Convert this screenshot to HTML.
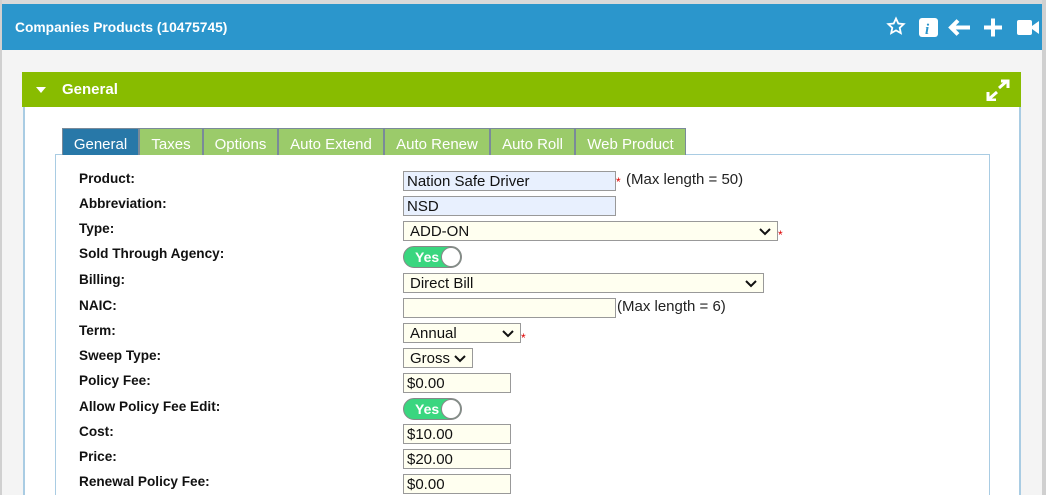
<!DOCTYPE html>
<html style="overflow:hidden;height:495px"><head><style>
*{margin:0;padding:0;box-sizing:border-box}
body{width:1046px;height:495px;overflow:hidden;background:#f4f4f4;font-family:"Liberation Sans",Arial,sans-serif;position:relative}
.a{position:absolute}
.top{left:0;top:0;width:1046px;height:4px;background:#d9d9d9}
.lb{left:0;top:0;width:2px;height:495px;background:#d0d0d0}
.rb{left:1042px;top:0;width:4px;height:495px;background:#d0d0d0}
.bar{left:2px;top:4px;width:1040px;height:46px;background:#2b96cc;color:#fff;font-weight:bold;font-size:13.8px;padding:16px 0 0 13px}
.gh{left:22px;top:72px;width:999px;height:35px;background:#88bc00;color:#fff;font-weight:bold;font-size:15px}
.panel{left:23px;top:107px;width:998px;height:388px;background:#fff;border-left:2px solid #a9cce3;border-right:2px solid #a9cce3}
.inner{left:55px;top:154px;width:935px;height:341px;border:1px solid #a9cce3;border-bottom:none}
.tab{top:128px;height:27px;background:#9bcb6a;color:#fff;font-size:15px;text-align:center;line-height:31px;border:1px solid #7a8a99;border-bottom:none}
.lbl{left:79px;font-weight:bold;font-size:13.6px;color:#111}
.in{left:403px;height:20px;border:1px solid #999;background:#fffff0;font-size:15px;line-height:19px;padding:0 0 0 3px;color:#111}
.bl{background:#e8f0fe}
.sel{font-size:15px;padding:0 0 0 6px}
.chev{position:absolute;right:6px;top:4px}
.tg{left:403px;width:59px;height:22px;border-radius:11px;background:#3ad67f;border:1px solid #888;color:#fff;font-weight:bold;font-size:14px;padding:2px 0 0 11px}
.tg i{position:absolute;right:0;top:0;width:20px;height:20px;border-radius:50%;background:#fff;border:1px solid #888}
.st{color:#d00;font-size:12px}
.note{font-size:15px;color:#222}
</style></head><body>
<div class="a top"></div><div class="a lb"></div><div class="a rb"></div>
<div class="a bar">Companies Products (10475745)</div>
<svg class="a" style="left:886px;top:16px" width="160" height="22" viewBox="886 16 160 22">
<path d="M896 18.5l2.3 5 5.4.6-4 3.7 1.1 5.3-4.8-2.7-4.8 2.7 1.1-5.3-4-3.7 5.4-.6z" fill="none" stroke="#fff" stroke-width="1.8"/>
<rect x="919" y="18" width="19" height="19" rx="3" fill="#fff"/>
<text x="925" y="34" font-family="Liberation Serif" font-style="italic" font-weight="bold" font-size="15" fill="#2b96cc">i</text>
<path d="M951 27.5h19M958 20.5l-7 7 7 7" stroke="#fff" stroke-width="4" fill="none"/>
<path d="M993 18.5v18M984 27.5h18" stroke="#fff" stroke-width="4"/>
<rect x="1017" y="20" width="15" height="15" rx="2" fill="#fff"/>
<path d="M1032 26l7-5v13l-7-5z" fill="#fff"/>
</svg>
<div class="a gh"><svg class="a" style="left:14px;top:15px" width="10" height="6"><path d="M0 0h10L5 6z" fill="#fff"/></svg><span class="a" style="left:40px;top:9px">General</span>
<svg class="a" style="left:964px;top:7px" width="24" height="22"><path d="M13 9l8-7M15 2h7v7M11 13l-8 7M2 13v8h8" stroke="#fff" stroke-width="3" fill="none"/></svg></div>
<div class="a panel"></div>
<div class="a inner"></div>
<div class="a tab" style="left:62px;width:77px;background:#2878a8">General</div>
<div class="a tab" style="left:139px;width:64px">Taxes</div>
<div class="a tab" style="left:203px;width:75px">Options</div>
<div class="a tab" style="left:278px;width:106px">Auto Extend</div>
<div class="a tab" style="left:384px;width:106px">Auto Renew</div>
<div class="a tab" style="left:490px;width:85px">Auto Roll</div>
<div class="a tab" style="left:575px;width:111px">Web Product</div>

<div class="a lbl" style="top:171px">Product:</div>
<div class="a lbl" style="top:196px">Abbreviation:</div>
<div class="a lbl" style="top:221px">Type:</div>
<div class="a lbl" style="top:246px">Sold Through Agency:</div>
<div class="a lbl" style="top:272px">Billing:</div>
<div class="a lbl" style="top:298px">NAIC:</div>
<div class="a lbl" style="top:323px">Term:</div>
<div class="a lbl" style="top:348px">Sweep Type:</div>
<div class="a lbl" style="top:373px">Policy Fee:</div>
<div class="a lbl" style="top:399px">Allow Policy Fee Edit:</div>
<div class="a lbl" style="top:424px">Cost:</div>
<div class="a lbl" style="top:449px">Price:</div>
<div class="a lbl" style="top:474px">Renewal Policy Fee:</div>

<div class="a in bl" style="top:171px;width:213px">Nation Safe Driver</div>
<span class="a st" style="left:616px;top:175px">*</span><span class="a note" style="left:626px;top:171px">(Max length = 50)</span>
<div class="a in bl" style="top:196px;width:213px">NSD</div>
<div class="a in sel" style="top:221px;width:375px">ADD-ON<svg class="chev" width="12" height="12"><path d="M1 3l5 5 5-5" stroke="#111" stroke-width="2" fill="none"/></svg></div>
<span class="a st" style="left:778px;top:228px">*</span>
<div class="a tg" style="top:246px">Yes<i></i></div>
<div class="a in sel" style="top:273px;width:361px">Direct Bill<svg class="chev" width="12" height="12"><path d="M1 3l5 5 5-5" stroke="#111" stroke-width="2" fill="none"/></svg></div>
<div class="a in" style="top:298px;width:213px"></div>
<span class="a note" style="left:617px;top:298px">(Max length = 6)</span>
<div class="a in sel" style="top:323px;width:118px">Annual<svg class="chev" width="12" height="12"><path d="M1 3l5 5 5-5" stroke="#111" stroke-width="2" fill="none"/></svg></div>
<span class="a st" style="left:521px;top:331px">*</span>
<div class="a in sel" style="top:348px;width:70px">Gross<svg class="chev" width="12" height="12"><path d="M1 3l5 5 5-5" stroke="#111" stroke-width="2" fill="none"/></svg></div>
<div class="a in" style="top:373px;width:108px">$0.00</div>
<div class="a tg" style="top:398px">Yes<i></i></div>
<div class="a in" style="top:424px;width:108px">$10.00</div>
<div class="a in" style="top:449px;width:108px">$20.00</div>
<div class="a in" style="top:474px;width:108px">$0.00</div>
</body></html>
